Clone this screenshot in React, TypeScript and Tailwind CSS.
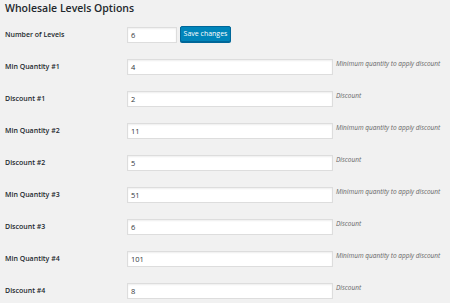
import React from "react";

const rows: { label: string; value: string; desc: string }[] = [
  { label: "Min Quantity #1", value: "4", desc: "Minimum quantity to apply discount" },
  { label: "Discount #1", value: "2", desc: "Discount" },
  { label: "Min Quantity #2", value: "11", desc: "Minimum quantity to apply discount" },
  { label: "Discount #2", value: "5", desc: "Discount" },
  { label: "Min Quantity #3", value: "51", desc: "Minimum quantity to apply discount" },
  { label: "Discount #3", value: "6", desc: "Discount" },
  { label: "Min Quantity #4", value: "101", desc: "Minimum quantity to apply discount" },
  { label: "Discount #4", value: "8", desc: "Discount" },
];

export default function App() {
  return (
    <div
      className="w-[450px] h-[303px] overflow-hidden bg-[#f1f1f1] text-[#23282d] pl-[5px]"
      style={{ fontFamily: '"Open Sans", "Noto Sans", sans-serif' }}
    >
      <h2 className="h-[19px] pt-[1px] text-[10.5px] leading-[15px] font-semibold text-[#23282d]">
        Wholesale Levels Options
      </h2>
      <div className="flex items-start h-[32px] pt-[8px]">
        <div className="w-[122px] text-[7px] leading-[16px] font-semibold">Number of Levels</div>
        <div className="w-[50px] h-[16px] bg-white border border-[#ddd] shadow-[inset_0_1px_2px_rgba(0,0,0,0.07)] text-[7.5px] leading-[14px] pl-[3px] text-[#32373c]">
          6
        </div>
        <button className="ml-[3px] -mt-[1px] w-[51px] h-[16px] rounded-[2px] bg-[#0085ba] border border-[#006799] text-white text-[7px] leading-[14px] shadow-[0_1px_0_#006799]">
          Save changes
        </button>
      </div>
      {rows.map((r) => (
        <div key={r.label} className="flex items-start h-[32px] pt-[8px]">
          <div className="w-[122px] text-[7px] leading-[16px] font-semibold">{r.label}</div>
          <div className="w-[206px] h-[16px] bg-white border border-[#ddd] shadow-[inset_0_1px_2px_rgba(0,0,0,0.07)] text-[7.5px] leading-[14px] pl-[3px] text-[#32373c]">
            {r.value}
          </div>
          <div className="ml-[3px] text-[6.5px] leading-[10px] italic text-[#666]">{r.desc}</div>
        </div>
      ))}
    </div>
  );
}
